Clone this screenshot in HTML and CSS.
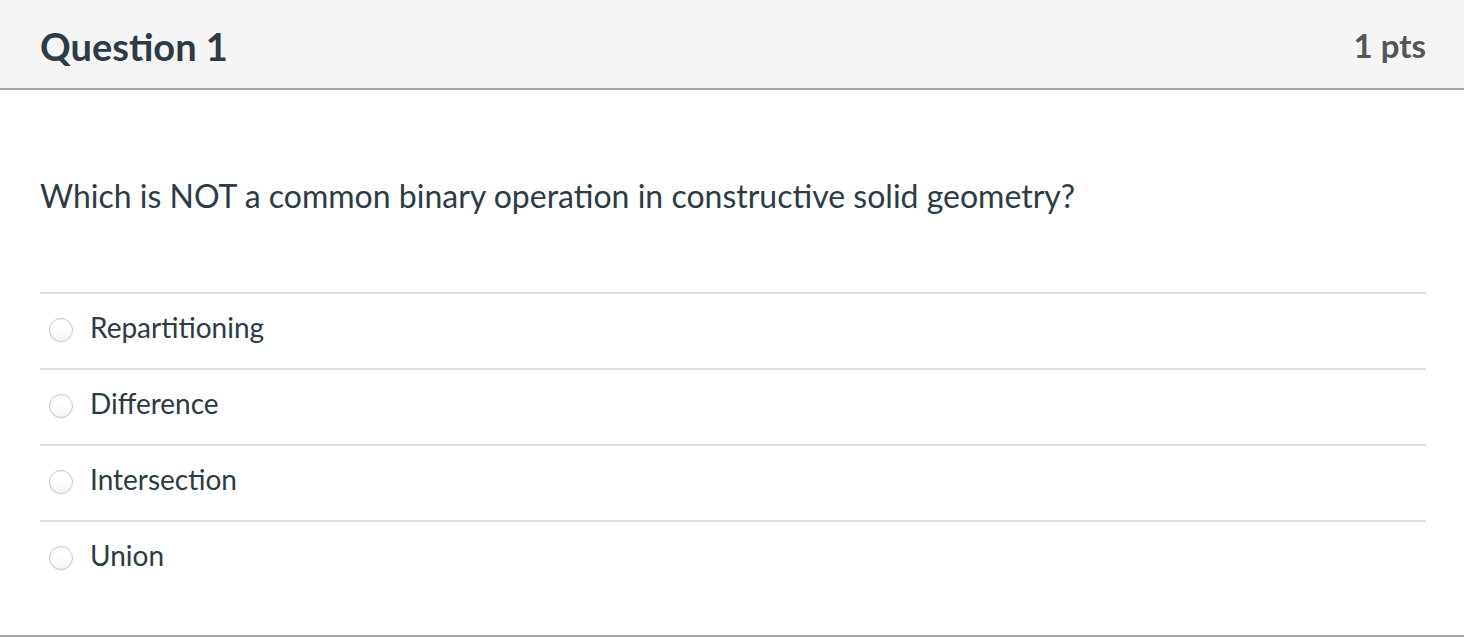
FILE: index.html
```html
<!DOCTYPE html>
<html lang="en">
<head>
<meta charset="utf-8">
<title>Question 1</title>
<link rel="stylesheet" href="styles.css">
</head>
<body>
<div class="question">
  <div class="question-header">
    <h2 class="question-title">Question 1</h2>
    <span class="question-points">1 pts</span>
  </div>
  <div class="question-body">
    <p class="question-text">Which is NOT a common binary operation in constructive solid geometry?</p>
    <ul class="answers">
      <li class="answer"><span class="radio"></span><span class="answer-label">Repartitioning</span></li>
      <li class="answer"><span class="radio"></span><span class="answer-label">Difference</span></li>
      <li class="answer"><span class="radio"></span><span class="answer-label">Intersection</span></li>
      <li class="answer"><span class="radio"></span><span class="answer-label">Union</span></li>
    </ul>
  </div>
</div>
</body>
</html>
```
FILE: styles.css
```css
html, body {
  margin: 0;
  padding: 0;
  background: #ffffff;
}
body {
  font-family: Lato, "Open Sans", "Liberation Sans", sans-serif;
  color: #2d3b45;
}
.question {
  border-bottom: 2px solid #a5a5a5;
}
.question-header {
  display: flex;
  align-items: center;
  justify-content: space-between;
  height: 88px;
  padding: 0 38px 0 40px;
  background: #f5f5f5;
  border-bottom: 2px solid #a5a5a5;
}
.question-title {
  margin: 0;
  font-size: 38px;
  font-weight: 700;
  color: #2d3b45;
  line-height: 1;
  padding-top: 3px;
}
.question-points {
  font-size: 33px;
  font-weight: 700;
  color: #555555;
  line-height: 1;
  padding-top: 3px;
}
.question-body {
  padding: 0 38px 39px 40px;
}
.question-text {
  margin: 83px 0 74px 0;
  font-size: 32px;
  line-height: 45px;
}
.answers {
  list-style: none;
  margin: 0;
  padding: 0;
}
.answer {
  display: flex;
  align-items: center;
  height: 39px;
  padding: 14px 0 21px 0;
  border-top: 2px solid #dddddd;
  font-size: 28px;
  line-height: 39px;
}
.radio {
  flex: none;
  width: 22px;
  height: 22px;
  margin: 4px 17px 0 9px;
  border: 1px solid #c8c8c8;
  border-radius: 50%;
  background: linear-gradient(#ffffff 40%, #f4f4f4);
  box-shadow: 0 1px 1px rgba(0,0,0,0.05);
}
.answer-label {
  color: #2d3b45;
}
```
